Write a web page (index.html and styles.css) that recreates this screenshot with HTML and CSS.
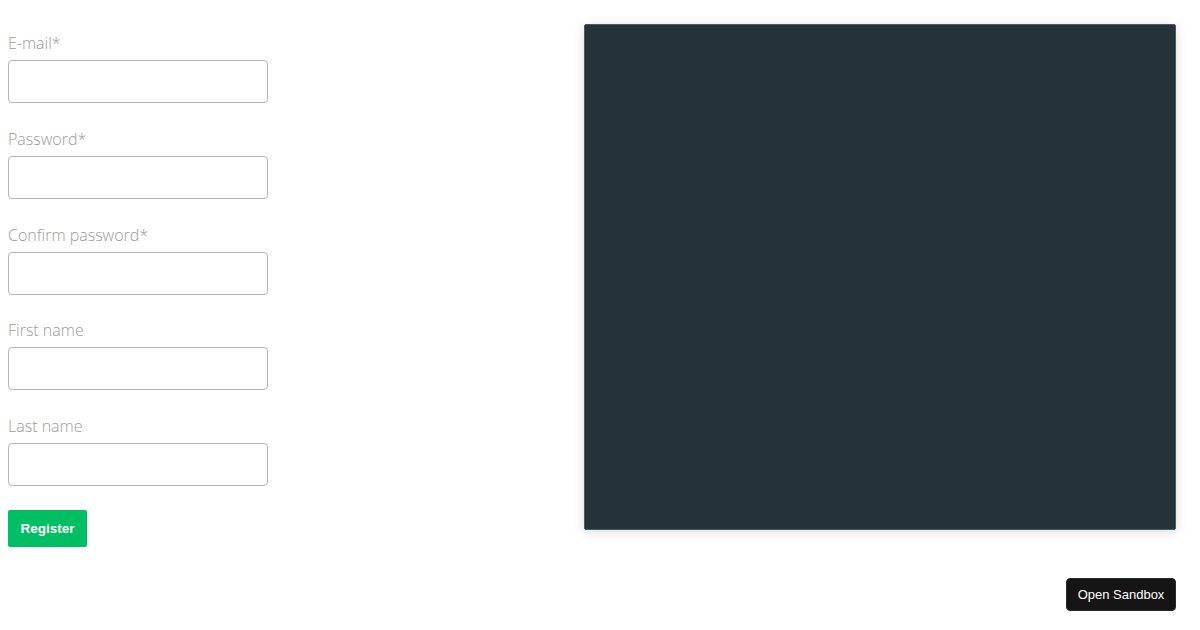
FILE: index.html
```html
<!DOCTYPE html>
<html lang="en">
<head>
<meta charset="utf-8">
<title>Register</title>
<link rel="stylesheet" href="styles.css">
</head>
<body>
<div class="page">
  <form class="form">
    <div class="field">
      <label class="label">E-mail*</label>
      <input class="input" type="text">
    </div>
    <div class="field">
      <label class="label">Password*</label>
      <input class="input" type="password">
    </div>
    <div class="field">
      <label class="label">Confirm password*</label>
      <input class="input" type="password">
    </div>
    <div class="field">
      <label class="label">First name</label>
      <input class="input" type="text">
    </div>
    <div class="field">
      <label class="label">Last name</label>
      <input class="input" type="text">
    </div>
    <button class="register" type="button">Register</button>
  </form>
  <div class="panel"></div>
</div>
<a class="sandbox">Open Sandbox</a>
</body>
</html>
```
FILE: styles.css
```css
html, body {
  margin: 0;
  padding: 0;
  background: #fff;
}
body {
  padding: 8px;
  font-family: "Open Sans", "Liberation Sans", sans-serif;
}
.page {
  display: flex;
  justify-content: space-between;
  align-items: flex-start;
  padding-right: 16px;
}
.form {
  display: flex;
  flex-direction: column;
  padding-top: 23px;
  width: 260px;
}
.field {
  display: flex;
  flex-direction: column;
  margin-bottom: 23.8px;
}
.label {
  font-weight: 300;
  font-size: 16px;
  line-height: 24px;
  color: #9a9a9a;
  margin-bottom: 5px;
}
.input {
  box-sizing: border-box;
  width: 260px;
  height: 43px;
  border: 1px solid #b5b5b5;
  border-radius: 4px;
  margin: 0;
  padding: 0 10px;
  background: #fff;
}
.register {
  align-self: flex-start;
  width: 79px;
  height: 37px;
  background: #00bf63;
  color: #fff;
  border: none;
  border-radius: 2px;
  font-family: "Liberation Sans", Arial, sans-serif;
  font-weight: bold;
  font-size: 13.5px;
  padding: 0;
  margin: 0;
}
.panel {
  margin-top: 16px;
  box-sizing: border-box;
  width: 592px;
  height: 506px;
  background: #253238;
  border: 1px solid #4a5a62;
  border-radius: 2px;
  box-shadow: 0 2px 12px rgba(0, 0, 0, 0.15);
}
.sandbox {
  position: fixed;
  right: 24px;
  bottom: 19px;
  box-sizing: border-box;
  width: 110px;
  height: 33px;
  background: #151515;
  color: #fff;
  border: 1px solid #2a2a2a;
  border-radius: 4px;
  font-family: "Liberation Sans", Arial, sans-serif;
  font-size: 13px;
  display: flex;
  align-items: center;
  justify-content: center;
}
```
